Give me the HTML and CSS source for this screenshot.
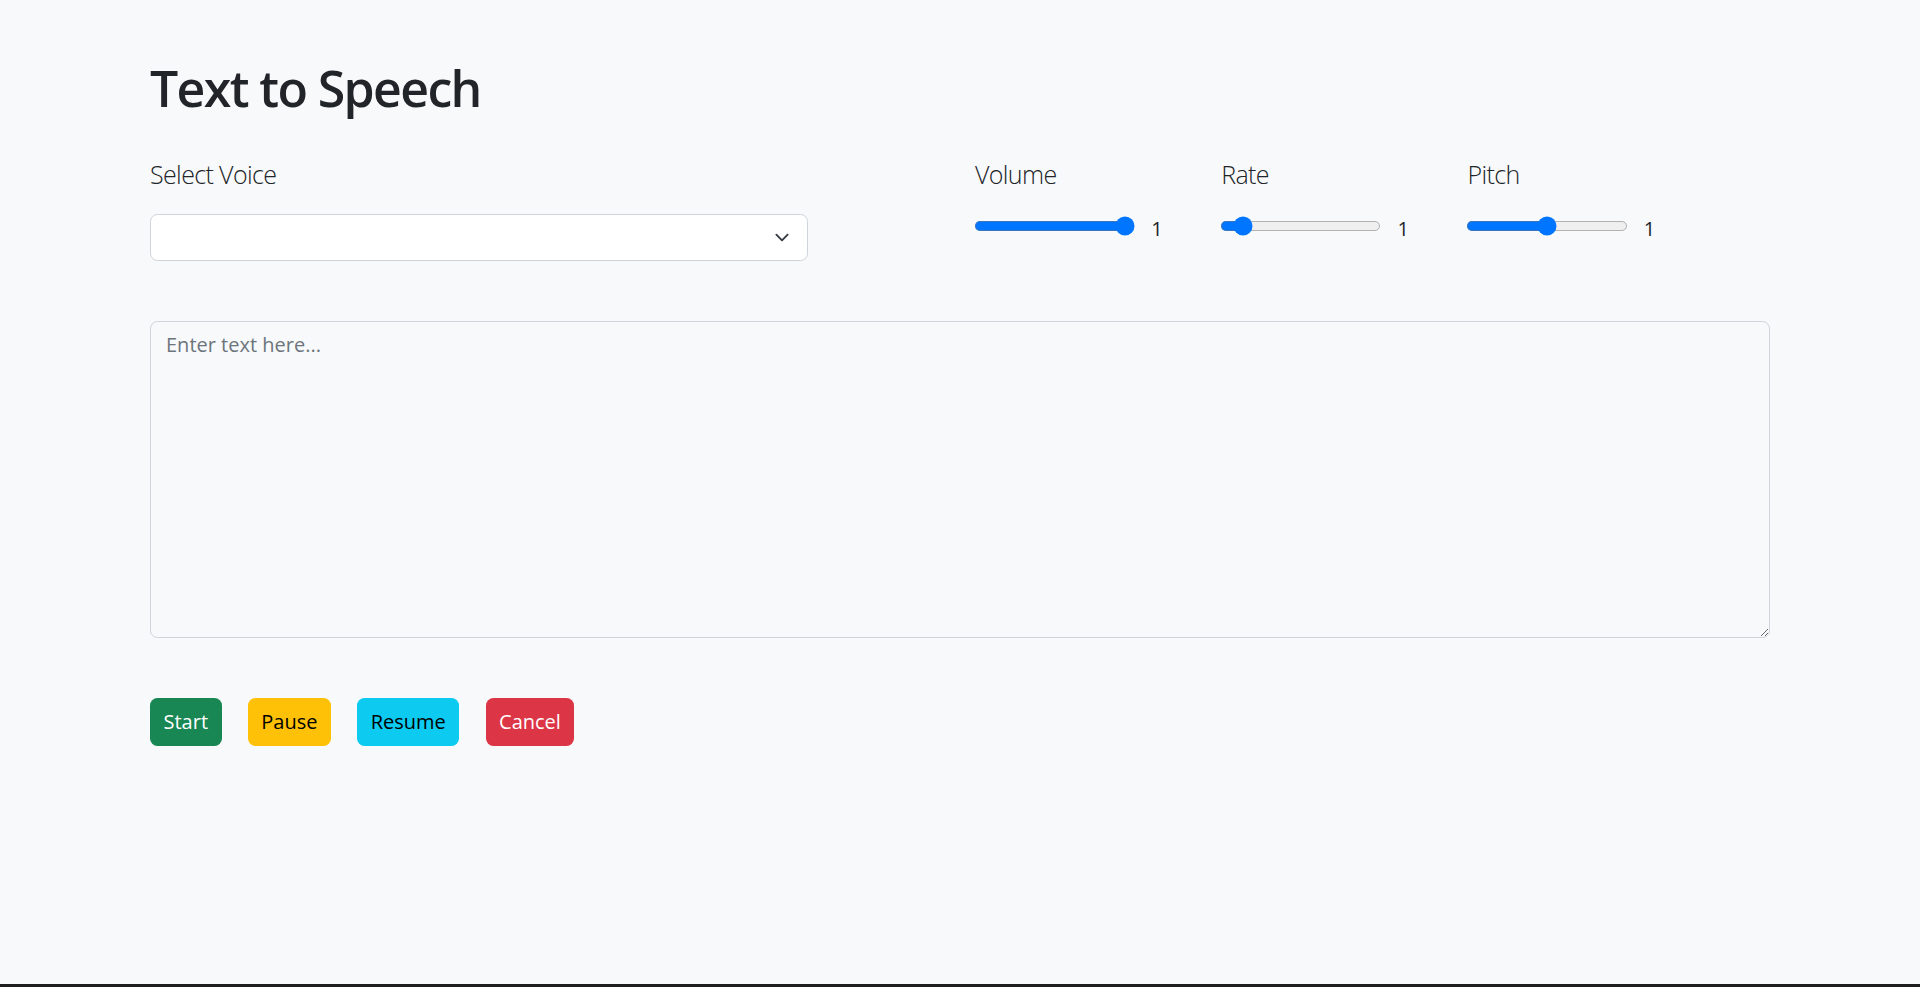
FILE: index.html
```html
<!DOCTYPE html>
<html lang="en">

<head>
	<meta charset="UTF-8">
	<meta name="viewport" content="width=device-width, initial-scale=1.0">
	<title>Text to Speech</title>
	<link rel="stylesheet" href="styles.css">
</head>

<body>
	<div class="page">
		<div class="app">
			<div class="container">
				<h1 class="title">Text to Speech</h1>

				<div class="controls">
					<div class="voice">
						<label class="field-label" for="voice">Select Voice</label>
						<select id="voice" class="form-select"></select>
					</div>

					<div class="sliders">
						<div class="slider">
							<label class="field-label" for="volume">Volume</label>
							<div class="slider-row">
								<input type="range" id="volume" min="0" max="1" step="0.1" value="1">
								<span class="value">1</span>
							</div>
						</div>
						<div class="slider">
							<label class="field-label" for="rate">Rate</label>
							<div class="slider-row">
								<input type="range" id="rate" min="0.1" max="10" step="0.1" value="1">
								<span class="value">1</span>
							</div>
						</div>
						<div class="slider">
							<label class="field-label" for="pitch">Pitch</label>
							<div class="slider-row">
								<input type="range" id="pitch" min="0" max="2" step="0.1" value="1">
								<span class="value">1</span>
							</div>
						</div>
					</div>
				</div>

				<textarea class="form-control" rows="10" placeholder="Enter text here..."></textarea>

				<div class="actions">
					<button class="btn -success">Start</button>
					<button class="btn -warning">Pause</button>
					<button class="btn -info">Resume</button>
					<button class="btn -danger">Cancel</button>
				</div>
			</div>
		</div>
	</div>
</body>

</html>
```

FILE: styles.css
```css
body {
	margin: 0;
	font-family: "Open Sans", sans-serif;
	color: #212529;
	background: #f8f9fa;
}

.page {
	min-height: 100vh;
	box-sizing: border-box;
	border-bottom: 3px solid #1f1f1f;
}

/* screenshot was taken at 125% */
.app {
	zoom: 1.25;
}

.container {
	max-width: 1296px;
	margin: 0 auto;
	padding: 46px 12px 0;
}

.title {
	font-size: 40px;
	font-weight: 600;
	letter-spacing: -1.3px;
	line-height: 1.2;
	margin: 0 0 8px;
}

.controls {
	display: flex;
	margin-top: 31px;
}

.voice {
	width: 526px;
	margin-right: 134px;
}

.field-label {
	display: block;
	font-size: 20px;
	font-weight: 300;
	letter-spacing: -0.5px;
	line-height: 30px;
	margin-bottom: 16px;
}

.form-select {
	display: block;
	width: 100%;
	height: 38px;
	padding: 6px 36px 6px 12px;
	font: inherit;
	font-size: 16px;
	color: #212529;
	background-color: #fff;
	background-image: url("data:image/svg+xml,%3csvg xmlns='http://www.w3.org/2000/svg' viewBox='0 0 16 16'%3e%3cpath fill='none' stroke='%23343a40' stroke-linecap='round' stroke-linejoin='round' stroke-width='2' d='m2 5 6 6 6-6'/%3e%3c/svg%3e");
	background-repeat: no-repeat;
	background-position: right 12px center;
	background-size: 16px 12px;
	border: 1px solid #ced4da;
	border-radius: 6px;
	appearance: none;
}

.sliders {
	display: grid;
	grid-template-columns: repeat(3, 197px);
}

.slider-row {
	display: flex;
	align-items: center;
	margin-top: -4px;
}

.slider-row input {
	margin: 2px 2px 2px -1px;
}

.value {
	font-size: 16px;
	line-height: 24px;
	margin: 4px 0 0 11px;
}

.form-control {
	display: block;
	width: 100%;
	box-sizing: border-box;
	margin-top: 48px;
	padding: 6px 12px;
	font: inherit;
	font-size: 16px;
	line-height: 24px;
	color: #212529;
	background: #f8f9fa;
	border: 1px solid #ced4da;
	border-radius: 6px;
}

.form-control::placeholder {
	color: #6c757d;
}

.actions {
	display: flex;
	gap: 21px;
	margin-top: 48px;
}

.btn {
	height: 38px;
	padding: 6px 10px;
	font: inherit;
	font-size: 16px;
	line-height: 24px;
	border: 1px solid transparent;
	border-radius: 6px;
	cursor: pointer;
}

.btn.-success {
	color: #fff;
	background: #198754;
}

.btn.-warning {
	color: #000;
	background: #ffc107;
}

.btn.-info {
	color: #000;
	background: #0dcaf0;
}

.btn.-danger {
	color: #fff;
	background: #dc3545;
}
```
